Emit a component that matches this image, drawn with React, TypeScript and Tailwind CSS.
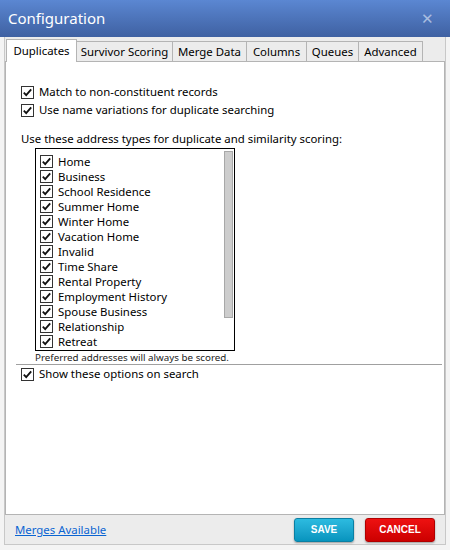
import React from "react";

const tabs = [
  { label: "Duplicates", w: "w-[71px]" },
  { label: "Survivor Scoring", w: "w-[96px]" },
  { label: "Merge Data", w: "w-[74px]" },
  { label: "Columns", w: "w-[60px]" },
  { label: "Queues", w: "w-[52px]" },
  { label: "Advanced", w: "w-[64px]" },
];

const addressTypes = [
  "Home",
  "Business",
  "School Residence",
  "Summer Home",
  "Winter Home",
  "Vacation Home",
  "Invalid",
  "Time Share",
  "Rental Property",
  "Employment History",
  "Spouse Business",
  "Relationship",
  "Retreat",
];

function Check() {
  return (
    <svg width="13" height="13" viewBox="0 0 13 13" className="shrink-0">
      <rect x="0.5" y="0.5" width="12" height="12" fill="#fff" stroke="#333" />
      <path d="M2.8 6.6 L5.2 9.2 L10.2 3.4" fill="none" stroke="#111" strokeWidth="1.8" />
    </svg>
  );
}

function CheckRow({ label }: { label: string }) {
  return (
    <div className="flex items-center gap-[5px] h-[18px]">
      <Check />
      <span>{label}</span>
    </div>
  );
}

export default function App() {
  return (
    <div className="w-[450px] h-[550px] bg-[#f4f4f4] text-[11.4px] text-[#000] font-['Noto_Sans',sans-serif] overflow-hidden">
      {/* Title bar */}
      <div className="h-[37px] bg-gradient-to-b from-[#5b87d2] to-[#3f61a2] flex items-center justify-between pl-[8px] pr-[16px]">
        <span className="text-[15px] text-white leading-none">Configuration</span>
        <span className="text-[#a9bde0] text-[15px] leading-none">✕</span>
      </div>

      <div className="ml-[4px] w-[442px] h-[508px] bg-[#ececec] border-x border-b border-[#c8c8c8] flex flex-col">
        {/* Tabs */}
        <div className="flex items-end h-[24px] pl-[1px]">
          {tabs.map((t, i) =>
            i === 0 ? (
              <div
                key={t.label}
                className={`${t.w} h-[23px] bg-white border border-b-0 border-[#b4b4b4] flex items-center justify-center -mb-px relative z-10`}
              >
                {t.label}
              </div>
            ) : (
              <div
                key={t.label}
                className={`${t.w} h-[20px] bg-[#ececec] border border-l-0 border-b-0 border-[#b4b4b4] flex items-center justify-center`}
              >
                {t.label}
              </div>
            )
          )}
        </div>

        {/* Panel */}
        <div className="h-[454px] bg-white border border-[#b4b4b4] pt-[21px]">
          <div className="pl-[15px]">
            <CheckRow label="Match to non-constituent records" />
            <CheckRow label="Use name variations for duplicate searching" />
            <div className="mt-[11px] h-[18px] flex items-center">
              Use these address types for duplicate and similarity scoring:
            </div>
            <div className="ml-[14px] w-[200px] h-[203px] border border-black flex">
              <div className="flex-1 pl-[4px] pt-[5px]">
                {addressTypes.map((a) => (
                  <div key={a} className="flex items-center gap-[5px] h-[15px]">
                    <Check />
                    <span className="leading-[15px]">{a}</span>
                  </div>
                ))}
              </div>
              <div className="w-[9px] mr-[1px] mt-[2px] h-[167px] bg-[#cdcdcd] border border-[#a8a8a8]" />
            </div>
            <div className="ml-[14px] text-[9.8px] h-[13px] leading-[13px] text-[#222]">
              Preferred addresses will always be scored.
            </div>
          </div>
          <div className="ml-[10px] mr-[2px] h-px bg-[#a0a0a0]" />
          <div className="pl-[15px]">
            <CheckRow label="Show these options on search" />
          </div>
        </div>

        {/* Footer */}
        <div className="flex-1 flex items-center justify-between pl-[10px] pr-[10px]">
          <a className="text-[#0a64d2] underline">Merges Available</a>
          <div className="flex gap-[11px]">
            <button className="w-[60px] h-[24px] rounded-[3px] bg-gradient-to-b from-[#2cbbe0] to-[#0694be] border border-[#0a7fa3] text-white text-[10px] font-bold font-['Liberation_Sans',sans-serif] shadow-[0_1px_2px_rgba(0,0,0,0.35)]">
              SAVE
            </button>
            <button className="w-[70px] h-[24px] rounded-[3px] bg-gradient-to-b from-[#ee1111] to-[#cc0000] border border-[#b00000] text-white text-[10px] font-bold font-['Liberation_Sans',sans-serif] shadow-[0_1px_2px_rgba(0,0,0,0.35)]">
              CANCEL
            </button>
          </div>
        </div>
      </div>
    </div>
  );
}
